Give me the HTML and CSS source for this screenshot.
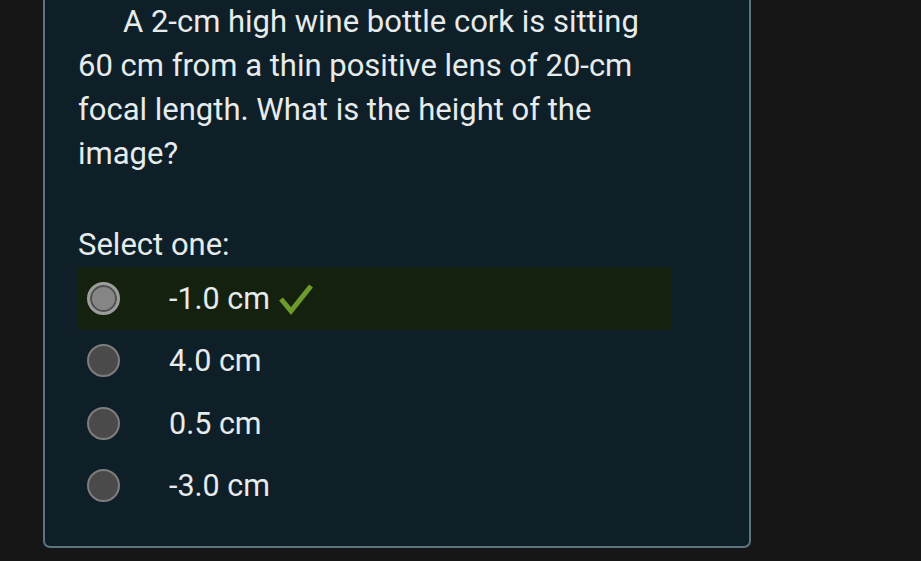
FILE: index.html
```html
<!DOCTYPE html>
<html>
<head>
<meta charset="utf-8">
<link rel="stylesheet" href="styles.css">
</head>
<body>
<div class="page">
  <div class="card">
    <p class="question">A 2-cm high wine bottle cork is sitting 60 cm from a thin positive lens of 20-cm focal length. What is the height of the image?</p>
    <div class="prompt">Select one:</div>
    <div class="answers">
      <div class="option correct">
        <span class="radio checked"></span>
        <span class="label">-1.0 cm</span>
        <svg class="tick" width="36" height="36" viewBox="0 0 36 36"><path d="M3 18 L13 30 L33 5" fill="none" stroke="#6c9a2c" stroke-width="5" stroke-linejoin="miter" stroke-linecap="butt"/></svg>
      </div>
      <div class="option">
        <span class="radio"></span>
        <span class="label">4.0 cm</span>
      </div>
      <div class="option">
        <span class="radio"></span>
        <span class="label">0.5 cm</span>
      </div>
      <div class="option">
        <span class="radio"></span>
        <span class="label">-3.0 cm</span>
      </div>
    </div>
  </div>
</div>
</body>
</html>
```

FILE: styles.css
```css
html, body {
  margin: 0;
  padding: 0;
  background: #161616;
}
body {
  font-family: Roboto, "Liberation Sans", sans-serif;
  color: #e6ebec;
  width: 921px;
  height: 561px;
  overflow: hidden;
}
.page {
  padding-left: 43px;
}
.card {
  width: 594px;
  height: 546px;
  box-sizing: content-box;
  background: #0f1f28;
  border: 2px solid #5a7480;
  border-top: none;
  border-radius: 0 0 7px 7px;
  padding: 0 77px 0 33px;
}
.question {
  margin: 0;
  font-size: 31px;
  line-height: 44px;
  text-indent: 45px;
}
.prompt {
  margin-top: 47px;
  font-size: 31px;
  line-height: 44px;
}
.answers {
  display: flex;
  flex-direction: column;
}
.option {
  height: 62.5px;
  display: flex;
  align-items: center;
  font-size: 30.5px;
  margin-left: -1px;
}
.option.correct {
  background: #14210f;
}
.radio {
  width: 29px;
  height: 29px;
  border-radius: 50%;
  background: #4a4a4a;
  border: 2px solid #7d7d7d;
  margin-left: 10px;
  flex: none;
}
.radio.checked {
  background: #858585;
  border: 3px solid #9c9c9c;
  width: 27px;
  height: 27px;
  box-shadow: inset 0 0 0 2px #4e4e4e;
}
.label {
  margin-left: 49px;
}
.tick {
  margin-left: 8px;
  margin-top: 2px;
}
```
